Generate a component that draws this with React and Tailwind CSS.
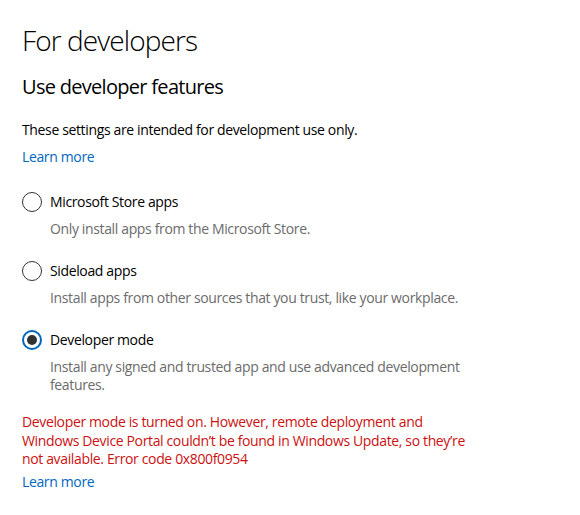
import React from "react";

function Radio({ checked }) {
    return checked ? (
        <span className="flex h-5 w-5 shrink-0 items-center justify-center rounded-full border-2 border-[#0067c0] bg-white">
            <span className="h-2.5 w-2.5 rounded-full bg-[#333333]" />
        </span>
    ) : (
        <span className="h-5 w-5 shrink-0 rounded-full border-[1.5px] border-[#333333] bg-white" />
    );
}

function Option({ label, desc, checked }) {
    return (
        <div className="flex flex-col">
            <div className="flex items-center gap-2">
                <Radio checked={checked} />
                <span className="text-[14px] leading-5 text-black">{label}</span>
            </div>
            <p className="mt-[8px] max-w-[445px] pl-[28px] text-[14px] leading-[18px] text-[#6b6b6b]">{desc}</p>
        </div>
    );
}

export default function App() {
    return (
        <div className="min-h-[515px] w-[580px] bg-white pl-[22px] pt-[22px] font-['Open_Sans',sans-serif] tracking-[-0.36px]">
            <h1 className="text-[28px] font-light leading-9 tracking-[-0.9px] text-black">For developers</h1>
            <h2 className="mt-[15px] text-[20px] leading-7 tracking-[-0.7px] text-black">Use developer features</h2>
            <p className="mt-[19px] text-[14px] leading-5 text-black">These settings are intended for development use only.</p>
            <a href="#" className="mt-[7px] block text-[14px] leading-5 text-[#0067c0]">Learn more</a>

            <div className="mt-[25px] flex flex-col gap-[23px]">
                <Option label="Microsoft Store apps" desc="Only install apps from the Microsoft Store." />
                <Option label="Sideload apps" desc="Install apps from other sources that you trust, like your workplace." />
                <Option checked label="Developer mode" desc="Install any signed and trusted app and use advanced development features." />
            </div>

            <p className="mt-[19px] max-w-[455px] text-[14px] leading-[18.5px] text-[#cc1111]">
                Developer mode is turned on. However, remote deployment and Windows Device Portal couldn’t be found in Windows Update, so they’re not available. Error code 0x800f0954
            </p>
            <a href="#" className="mt-[3px] block text-[14px] leading-5 text-[#0067c0]">Learn more</a>
        </div>
    );
}
